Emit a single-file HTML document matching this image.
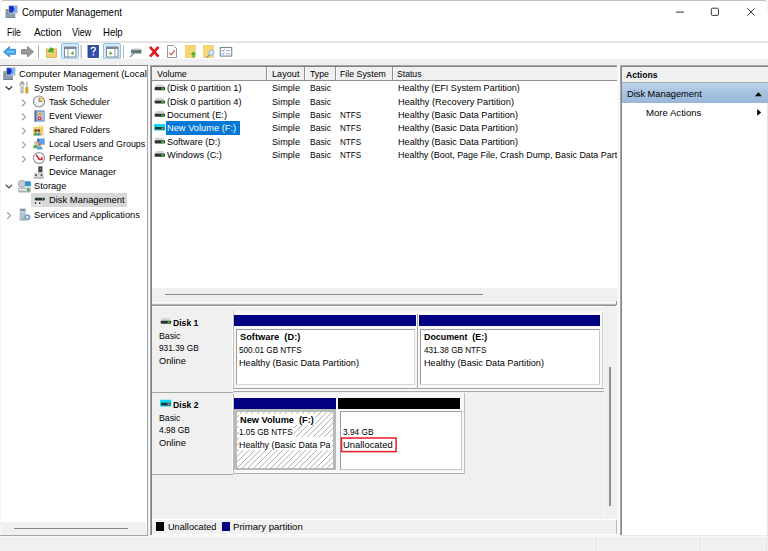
<!DOCTYPE html>
<html lang="en"><head><meta charset="utf-8"><title>Computer Management</title>
<style>
html,body{margin:0;padding:0;background:#fff;}
body{width:768px;height:551px;overflow:hidden;font-family:"Liberation Sans",sans-serif;}
#win{position:relative;width:768px;height:551px;overflow:hidden;background:#fff;}
#win div,#win span.t,#win svg{position:absolute;}
.t{white-space:pre;line-height:14px;height:14px;color:#000;font-size:9.9px;transform-origin:0 0;}
.g{background:#f0f0f0;}
.w{background:#fff;}

</style></head>
<body>
<div id="win">
<!-- window frame -->
<div style="left:0;top:0;width:768px;height:12px;box-sizing:border-box;border-top:1px solid #c2c2c2;border-left:1px solid #f3f3f3;border-right:1px solid #f3f3f3;border-radius:4px 4px 0 0;background:#fff"></div>
<!-- title icon -->
<svg style="left:4px;top:4px" width="16" height="16" viewBox="4 4 16 16">
 <rect x="8.3" y="5.2" width="9.5" height="8.3" rx="0.6" fill="#bcc4cd"/>
 <rect x="9.2" y="6.1" width="7.8" height="6.3" fill="#74b2f6"/>
 <path d="M9.2 6.1H13L14.2 9L12.6 12.4H9.2Z" fill="#1d2fc0"/>
 <path d="M13 6.100L14.200 9L12.600 12.400L15 10.200Z" fill="#4a78e0"/>
 <rect x="5.6" y="9" width="3" height="5" fill="#8b949c"/>
 <rect x="6.200" y="10.100" width="1.300" height="1.300" fill="#52c452"/>
 <rect x="5.600" y="13.500" width="9.600" height="4.400" fill="#6c7f93"/>
 <rect x="6.300" y="14.500" width="8.200" height="0.900" fill="#b9c5d1"/>
 <rect x="6.300" y="16.200" width="8.200" height="0.800" fill="#94a4b4"/>
</svg>
<!-- window controls -->
<svg style="left:670px;top:4px" width="92" height="16" viewBox="0 0 92 16">
 <path d="M5.8 8.1H14" stroke="#333" stroke-width="1" fill="none"/>
 <rect x="41.3" y="4.2" width="7.2" height="7.2" rx="1.2" fill="none" stroke="#333" stroke-width="1"/>
 <path d="M77.2 4.1L84.8 11.7M84.8 4.1L77.2 11.7" stroke="#333" stroke-width="1" fill="none"/>
</svg>
<!-- menu/toolbar separator -->
<div style="left:0;top:41px;width:768px;height:1px;background:#e9e9e9"></div>
<div style="left:0;top:42px;width:768px;height:1px;background:#e2e2e2"></div>
<!-- toolbar icons -->
<svg style="left:0;top:43px" width="250" height="17" viewBox="0 43 250 17">
 <!-- back arrow -->
 <path d="M3.5 51.8L9.6 46.6V49.3H15.6V54.3H9.6V57Z" fill="#45a4f0" stroke="#2b83d8" stroke-width="0.8"/><path d="M7 51.8H14" stroke="#6fd0fb" stroke-width="1.6"/>
 <!-- forward arrow -->
 <path d="M33.5 51.7L27.5 46.5V49.5H21.5V54H27.5V57Z" fill="#9a9a9a" stroke="#7a7a7a" stroke-width="0.8"/>
 <rect x="38" y="45" width="1" height="13.5" fill="#b5b5b5"/>
 <!-- up folder -->
 <rect x="46.5" y="49" width="10" height="8.5" fill="#f0cf6e" stroke="#d0a640" stroke-width="0.8"/>
 <path d="M48 52L51 47.5L54 49.5L52 50L53.5 52.5" fill="#3fae3a" stroke="#2f8e2c" stroke-width="0.6"/>
 <!-- show/hide tree (active) -->
 <rect x="61.5" y="43.5" width="17" height="15.5" rx="1.5" fill="#d7eafb" stroke="#8cc2f2" stroke-width="1"/>
 <rect x="64.5" y="47" width="11.5" height="10" fill="#fff" stroke="#7c8794" stroke-width="1"/>
 <rect x="64.5" y="47" width="11.5" height="2" fill="#7c8794"/>
 <rect x="67.5" y="49" width="0.8" height="8" fill="#7c8794"/>
 <path d="M73.5 51.2V55.2L70.5 53.2Z" fill="#3fae3a"/>
 <rect x="80.6" y="45" width="1.2" height="13.5" fill="#b5b5b5"/>
 <!-- help -->
 <rect x="88" y="45.5" width="10.5" height="12" fill="#2f4fb0" stroke="#223b8a" stroke-width="0.8"/>
 <path d="M91.3 49.2Q91.3 47.4 93.3 47.4Q95.3 47.4 95.3 49.2Q95.3 50.4 93.4 51.4V52.8" fill="none" stroke="#fff" stroke-width="1.3"/>
 <rect x="92.7" y="54" width="1.4" height="1.4" fill="#fff"/>
 <!-- action pane (active) -->
 <rect x="103.5" y="43.5" width="17" height="15.5" rx="1.5" fill="#d7eafb" stroke="#8cc2f2" stroke-width="1"/>
 <rect x="106.5" y="47" width="11.5" height="10" fill="#fff" stroke="#7c8794" stroke-width="1"/>
 <rect x="106.500" y="47" width="11.5" height="2" fill="#7c8794"/>
 <rect x="114.5" y="49" width="0.8" height="8" fill="#7c8794"/>
 <path d="M109.5 51.2V55.2L112.5 53.2Z" fill="#3fae3a"/>
 <rect x="123" y="45" width="1" height="13.5" fill="#b5b5b5"/>
 <!-- connect disk -->
 <rect x="131" y="49.5" width="10.5" height="4" rx="0.8" fill="#6f7a80"/>
 <rect x="131.5" y="48.5" width="9.5" height="1.3" fill="#c6cdd2"/>
 <rect x="138.5" y="50.8" width="2.5" height="1.6" fill="#2e9a3a"/>
 <path d="M130 57L134.5 53" stroke="#7f8d99" stroke-width="1.1" fill="none"/>
 <!-- delete X -->
 <path d="M150 46.8L158.5 56.6M158.5 46.8L150 56.6" stroke="#e01b24" stroke-width="2.6" fill="none"/>
 <!-- properties (sheet with check) -->
 <path d="M167.5 45.5H173.5L176.5 48.5V57.5H167.5Z" fill="#fff" stroke="#8a8a8a" stroke-width="0.9"/>
 <path d="M169.3 52.8L171.3 54.8L174.8 50.2" fill="none" stroke="#e0522e" stroke-width="1.1"/>
 <!-- yellow sheet with green arrow -->
 <rect x="185.3" y="45.3" width="10" height="12.4" fill="#f7d774" stroke="#f0c95a" stroke-width="0.6"/>
 <path d="M192.5 57.5V54.5H190.6L193.4 51.4L196.2 54.5H194.4V57.5Z" fill="#3fae3a"/>
 <!-- yellow sheet with magnifier -->
 <rect x="203.3" y="45.3" width="10" height="12.4" fill="#f7d774" stroke="#f0c95a" stroke-width="0.6"/>
 <circle cx="211.5" cy="52.8" r="2.6" fill="#cfe4f7" stroke="#8fb2d3" stroke-width="0.9"/>
 <path d="M209.5 55L206.5 57.5" stroke="#8a8f96" stroke-width="1.1"/>
 <!-- list view -->
 <rect x="220.3" y="47.5" width="11.4" height="8.6" fill="#fff" stroke="#7c8794" stroke-width="1.1"/>
 <path d="M222 50.3L223 51.3L224.6 49.4M222 53.5L223 54.5L224.6 52.6" fill="none" stroke="#3a8be0" stroke-width="0.9"/>
 <path d="M226 50.6H230M226 53.8H230" stroke="#9aa3ad" stroke-width="0.9"/>
</svg>
<!-- gray band below toolbar + main area backdrop -->
<div class="g" style="left:0;top:59px;width:768px;height:492px"></div>

<!-- LEFT PANEL -->
<div style="left:0;top:65px;width:148px;height:471px;background:#a0a4ab"></div>
<div style="left:0;top:65px;width:148px;height:1px;background:#858585"></div>
<div class="w" style="left:1px;top:66px;width:146px;height:469px"></div>
<div style="left:0;top:66px;width:1px;height:469px;background:#f6f6f6"></div>
<div class="g" style="left:1px;top:522.3px;width:145px;height:12.7px"></div>
<div style="left:14px;top:528px;width:114px;height:1px;background:#8a8a8a"></div>
<!-- tree selection -->
<div style="left:31px;top:193px;width:96px;height:14px;background:#d9d9d9"></div>

<!-- MIDDLE PANEL -->
<div style="left:148px;top:65px;width:2px;height:471px;background:#f6f6f6"></div>
<div style="left:150px;top:65px;width:467px;height:470px;background:#a6a6a6"></div>
<div style="left:151px;top:66px;width:466px;height:469px;background:#808080"></div>
<div style="left:617px;top:65px;width:3px;height:471px;background:#f8f8f8"></div>
<div style="left:150px;top:535px;width:470px;height:1px;background:#f7f7f7"></div>
<div class="g" style="left:152px;top:67px;width:465px;height:467px"></div>
<div style="left:152px;top:533.6px;width:465px;height:1px;background:#b4b4b4"></div>
<div style="left:615.6px;top:520px;width:1px;height:14px;background:#bcbcbc"></div>
<div style="left:603px;top:307px;width:1px;height:212px;background:#f9f9f9"></div>
<!-- list view -->
<div class="w" style="left:152px;top:67px;width:465px;height:221px"></div>
<div class="g" style="left:152px;top:67px;width:465px;height:13px"></div>
<div style="left:152px;top:80px;width:465px;height:1px;background:#8e8e8e"></div>
<div style="left:266px;top:67px;width:1px;height:13px;background:#8e8e8e"></div><div class="w" style="left:267px;top:67px;width:1px;height:13px"></div>
<div style="left:304px;top:67px;width:1px;height:13px;background:#8e8e8e"></div><div class="w" style="left:305px;top:67px;width:1px;height:13px"></div>
<div style="left:334.500px;top:67px;width:1px;height:13px;background:#8e8e8e"></div><div class="w" style="left:335.5px;top:67px;width:1px;height:13px"></div>
<div style="left:391.500px;top:67px;width:1px;height:13px;background:#8e8e8e"></div><div class="w" style="left:392.5px;top:67px;width:1px;height:13px"></div>
<!-- selected row -->
<div style="left:166px;top:121.4px;width:74px;height:13.3px;background:#0078d7"></div>
<!-- h scrollbar of list -->
<div style="left:165px;top:293.5px;width:318px;height:1px;background:#8a8a8a"></div>
<!-- splitter -->
<div style="left:152px;top:302px;width:464px;height:1px;background:#fafafa"></div>
<div style="left:152px;top:304px;width:464px;height:1px;background:#b4b4b4"></div>
<div style="left:152px;top:305px;width:464px;height:1px;background:#969696"></div>
<div class="w" style="left:152px;top:306px;width:451px;height:1px"></div>
<div style="left:615.5px;top:301px;width:1px;height:4px;background:#8e8e8e"></div>
<!-- v scrollbar of disk map -->
<div style="left:609.4px;top:366.5px;width:1.4px;height:139px;background:#909090"></div>
<!-- DISK MAP -->
<div style="left:233px;top:310.5px;width:370.5px;height:78px;background:#f8f8f8;"></div>
<div style="left:231.5px;top:310.5px;width:1px;height:81.5px;background:#fff;"></div>
<div style="left:232.5px;top:310.5px;width:1px;height:81.5px;background:#bdbdbd;"></div>
<div style="left:152px;top:391.8px;width:81px;height:1px;background:#a6a6a6;"></div>
<div style="left:233px;top:388px;width:370.5px;height:0.9px;background:#a0a0a0;"></div>
<div style="left:233px;top:389px;width:370.5px;height:2px;background:#f8f8f8;"></div>
<div style="left:233px;top:391px;width:370.5px;height:0.9px;background:#a8a8a8;"></div>
<div style="left:234px;top:315.2px;width:182px;height:11px;background:#000080;"></div>
<div style="left:236px;top:328.5px;width:178.5px;height:56.5px;background:#fff;box-sizing:border-box;border:1px solid #9c9c9c;border-right-color:#d8d8d8;border-bottom-color:#d8d8d8"></div>
<div style="left:416.5px;top:314px;width:1px;height:74px;background:#a8a8a8;"></div>
<div style="left:418.6px;top:315.2px;width:181.6px;height:11px;background:#000080;"></div>
<div style="left:420.4px;top:328.5px;width:180px;height:56.5px;background:#fff;box-sizing:border-box;border:1px solid #9c9c9c;border-right-color:#c8c8c8;border-bottom-color:#d8d8d8"></div>
<div style="left:601.6px;top:312px;width:1px;height:76px;background:#d0d0d0;"></div>
<div style="left:233px;top:392.5px;width:231.5px;height:80.5px;background:#f8f8f8;"></div>
<div style="left:231.5px;top:393px;width:1px;height:81px;background:#fff;"></div>
<div style="left:232.5px;top:393px;width:1px;height:81px;background:#bdbdbd;"></div>
<div style="left:152px;top:473.5px;width:81px;height:1px;background:#a6a6a6;"></div>
<div style="left:233px;top:473px;width:231.5px;height:1px;background:#b0b0b0;"></div>
<div style="left:464px;top:392.5px;width:1px;height:81px;background:#c0c0c0;"></div>
<div style="left:234px;top:397.8px;width:101.6px;height:10.8px;background:#000080;"></div>
<div style="left:233.5px;top:409px;width:102.5px;height:61px;background:#b9b9b9"></div>
<div style="left:236.5px;top:412px;width:96.5px;height:55.5px;background:#fff"></div>
<div style="left:236.5px;top:412px;width:96.5px;height:55.5px;background:repeating-linear-gradient(135deg,rgba(0,0,0,0) 0,rgba(0,0,0,0) 2.9px,#adadad 3.3px,#adadad 3.6px,rgba(0,0,0,0) 4px)"></div>
<div style="left:239px;top:413.6px;width:75.6px;height:11px;background:#fff;"></div>
<div style="left:239px;top:424.5px;width:55.2px;height:12.5px;background:#fff;"></div>
<div style="left:239px;top:437px;width:92.6px;height:12.8px;background:#fff;"></div>
<div style="left:338px;top:398px;width:122.2px;height:10.6px;background:#000;"></div>
<div style="left:339.6px;top:410.6px;width:122px;height:59.3px;background:#fff;box-sizing:border-box;border:1px solid #9c9c9c;border-right-color:#c4c4c4;border-bottom-color:#c4c4c4"></div>
<svg style="left:338px;top:434px" width="62" height="21" viewBox="338 434 62 21"><rect x="341.5" y="438" width="54.6" height="13.6" fill="none" stroke="#ec1c24" stroke-width="1.5"/></svg>
<div style="left:152px;top:519.3px;width:464px;height:1px;background:#fff;"></div>
<div style="left:156px;top:522px;width:8px;height:9px;background:#000;"></div>
<div style="left:222px;top:522px;width:8px;height:9px;background:#000080;"></div>
<div style="left:152px;top:533.5px;width:467px;height:1.5px;background:#fff;"></div>
<!-- RIGHT PANEL -->
<div style="left:620px;top:65px;width:148px;height:470px;background:#a8a8a8;"></div>
<div style="left:621px;top:66px;width:147px;height:469px;background:#848484;"></div>
<div style="left:622px;top:67px;width:146px;height:467.6px;background:#fff;"></div>
<div style="left:620px;top:534.6px;width:148px;height:1.4px;background:#eaeaea;"></div>
<div style="left:767px;top:67px;width:1px;height:468px;background:#e6e6e6;"></div>
<div style="left:622px;top:67px;width:146px;height:15px;background:#f0f0f0;"></div>
<div style="left:622px;top:82px;width:146px;height:1px;background:#adadad;"></div>
<div style="left:622px;top:83px;width:146px;height:19.6px;background:transparent;background:linear-gradient(#bed3ea,#a9c4e2 45%,#98b7d9)"></div>
<svg style="left:750px;top:88px" width="16" height="30" viewBox="750 88 16 30"><path d="M754.9 96.2L758.4 92.2L761.9 96.2Z" fill="#000"/><path d="M757.2 109L761.2 112.4L757.2 115.8Z" fill="#000"/></svg>
<!-- STATUS BAR -->
<div style="left:0;top:536px;width:768px;height:15px;background:#f0f0f0;"></div>
<div style="left:0;top:536.4px;width:768px;height:1px;background:#f7f7f7;"></div>
<div style="left:596.5px;top:537px;width:1px;height:14px;background:#fbfbfb;"></div>
<div style="left:595.5px;top:537px;width:1px;height:14px;background:#e2e2e2;"></div>
<div style="left:700.5px;top:537px;width:1px;height:14px;background:#fbfbfb;"></div>
<div style="left:699.5px;top:537px;width:1px;height:14px;background:#e2e2e2;"></div>
<div style="left:765.5px;top:537px;width:1px;height:14px;background:#e2e2e2;"></div>
<!-- TREE ICONS -->
<svg style="left:0;top:66px" width="48" height="160" viewBox="0 66 48 160">
<!-- chevrons -->
<g fill="none" stroke="#3c3c3c" stroke-width="1.2" stroke-linecap="round" stroke-linejoin="round">
 <path d="M6 86.7L8.9 89.5L11.8 86.7"/>
 <path d="M6 185.1L8.9 187.9L11.8 185.1"/>
</g>
<g fill="none" stroke="#9e9e9e" stroke-width="1.2" stroke-linecap="round" stroke-linejoin="round">
 <path d="M22.4 100L25.4 102.9L22.4 105.8"/>
 <path d="M22.4 114L25.4 116.9L22.4 119.8"/>
 <path d="M22.4 128.1L25.4 131L22.4 133.9"/>
 <path d="M22.4 142.1L25.4 145L22.4 147.9"/>
 <path d="M22.4 156.3L25.4 159.200L22.4 162.1"/>
 <path d="M7.600 212.7L10.6 215.600L7.6 218.5"/>
</g>
<!-- computer management -->
<g transform="translate(-2.3 62.1)">
 <rect x="8.3" y="5.2" width="9.5" height="8.3" rx="0.6" fill="#bcc4cd"/>
 <rect x="9.2" y="6.1" width="7.8" height="6.3" fill="#74b2f6"/>
 <path d="M9.2 6.1H13L14.2 9L12.6 12.4H9.2Z" fill="#1d2fc0"/>
 <path d="M13 6.100L14.200 9L12.600 12.400L15 10.200Z" fill="#4a78e0"/>
 <rect x="5.6" y="9" width="3" height="5" fill="#8b949c"/>
 <rect x="6.200" y="10.100" width="1.300" height="1.300" fill="#52c452"/>
 <rect x="5.600" y="13.500" width="9.600" height="4.400" fill="#6c7f93"/>
 <rect x="6.300" y="14.500" width="8.200" height="0.900" fill="#b9c5d1"/>
 <rect x="6.300" y="16.200" width="8.200" height="0.800" fill="#94a4b4"/>
</g>
<!-- system tools -->
<g>
 <path d="M21.8 81.600C19.8 82.5 19.4 85.2 21 86.500V92.6Q22 93.6 23 92.600V86.5C24.6 85.2 24.3 82.5 22.600 81.6V84.300H21.8Z" fill="#f4f4f4" stroke="#8c8c8c" stroke-width="0.9"/>
 <rect x="26.3" y="81.5" width="1.200" height="5.6" fill="#a8a8a8"/>
 <rect x="25.2" y="86.900" width="3.2" height="6.600" rx="0.8" fill="#dca032"/>
</g>
<!-- task scheduler -->
<g>
 <circle cx="39" cy="101.5" r="5.500" fill="#eef3f9" stroke="#8e8e8e" stroke-width="1.2"/>
 <path d="M39 101.5V96.800A4.700 4.700 0 0 1 43.600 101.5Z" fill="#f0c860"/>
 <path d="M39 98V101.5H41.800" stroke="#5b6b80" stroke-width="0.8" fill="none"/>
</g>
<!-- event viewer -->
<g>
 <rect x="34.6" y="110.3" width="10.200" height="11.400" rx="0.8" fill="#7f9fd6"/>
 <rect x="34.600" y="110.3" width="1.600" height="11.4" fill="#5a6a90"/>
 <rect x="37" y="112" width="6.800" height="8.2" fill="#a9c1e8"/>
 <path d="M38.7 116V114.200Q38.700 112 40.200 112Q41.700 112 41.700 114.2V116Z" fill="#eeb030"/>
 <circle cx="39.600" cy="118.4" r="1.900" fill="#e03030"/>
 <circle cx="39.600" cy="118.400" r="0.700" fill="#fff"/>
</g>
<!-- shared folders -->
<g>
 <path d="M33.200 127H38.300L39.300 125.600H43.400V135.400H33.200Z" fill="#f3cd68"/>
 <rect x="39.800" y="126.300" width="3" height="0.900" fill="#fff6d8"/>
 <circle cx="35.700" cy="130.600" r="1.400" fill="#5a4630"/>
 <circle cx="38.800" cy="130.600" r="1.400" fill="#5a4630"/>
 <path d="M33.600 135.600Q33.600 132.500 35.700 132.500Q37.200 132.500 37.400 135.600Z" fill="#4fae4a"/>
 <path d="M36.900 135.600Q36.900 132.500 38.800 132.500Q40.800 132.500 40.800 135.600Z" fill="#4f8fd0"/>
</g>
<!-- local users and groups -->
<g>
 <rect x="37.600" y="138.300" width="7.300" height="6.600" fill="#9fb0c8"/>
 <rect x="38.400" y="139" width="5.800" height="5" fill="#5a9cf0"/>
 <path d="M37.200 138.600L39.400 140.300L37.600 142.500Z" fill="#1a2fb5"/>
 <circle cx="35.900" cy="142.600" r="1.700" fill="#d9b48a"/>
 <circle cx="39.400" cy="144.600" r="1.800" fill="#b98a62"/>
 <path d="M33.200 148.200Q33.200 144.600 35.800 144.600Q38 144.600 38 148.200Z" fill="#58b052"/>
 <path d="M36.800 149.400Q36.800 146.200 39.600 146.200Q42.600 146.200 42.600 149.400Z" fill="#5f9fe0"/>
</g>
<!-- performance -->
<g>
 <circle cx="39" cy="158.100" r="5.500" fill="#fff" stroke="#9a9a9a" stroke-width="1.200"/>
 <path d="M36.200 155L39.400 159.300L41.900 159.500L41.900 156.900" fill="none" stroke="#e01c24" stroke-width="1.500" stroke-linejoin="round"/>
</g>
<!-- device manager -->
<g>
 <rect x="38.200" y="166.300" width="4.300" height="6.400" fill="#4a4f52"/>
 <rect x="40" y="168" width="1" height="1" fill="#38c040"/>
 <rect x="33.800" y="172.400" width="10" height="6.200" fill="#d8dadc"/>
 <rect x="33.800" y="177.400" width="10" height="1.200" fill="#a8abad"/>
 <rect x="35.300" y="174.200" width="1.600" height="1.900" fill="#3c3f42"/>
 <rect x="40.700" y="174.200" width="1.600" height="1.900" fill="#3c3f42"/>
</g>
<!-- storage -->
<g>
 <ellipse cx="22" cy="183.800" rx="3.700" ry="3.300" fill="#c9cdd0" stroke="#8f9498" stroke-width="0.800"/>
 <rect x="25" y="181.300" width="5.900" height="5" rx="0.800" fill="#2f90dc"/>
 <rect x="18.300" y="187.500" width="12.500" height="5" rx="1" fill="#a9adb1"/>
 <rect x="19.200" y="188.700" width="8" height="2" fill="#e8eaec"/>
 <rect x="27.300" y="188.600" width="1.700" height="2.600" fill="#2fae3a"/>
</g>
<!-- disk management -->
<g>
 <rect x="34.900" y="197.700" width="10" height="2.700" rx="0.800" fill="#2e3133"/>
 <rect x="42.100" y="197.900" width="1.100" height="2.200" fill="#35c03e"/>
 <rect x="33.300" y="200.900" width="8.700" height="5.100" fill="#e4e5e6"/>
 <rect x="34.800" y="202.100" width="1.400" height="1.900" fill="#3c3f42"/>
 <rect x="39" y="202.100" width="1.400" height="1.900" fill="#3c3f42"/>
</g>
<!-- services and applications -->
<g>
 <rect x="19.600" y="208.400" width="6.200" height="12.400" fill="#b4c0cc"/>
 <rect x="20.600" y="209.500" width="4.200" height="1" fill="#4a5a78"/>
 <rect x="20.600" y="211.600" width="4.200" height="0.800" fill="#e8eef4"/>
 <circle cx="27.300" cy="217.300" r="3.100" fill="#7fa0c8"/>
 <circle cx="27.300" cy="217.300" r="1.200" fill="#e8f0f8"/>
 <rect x="22.500" y="218.500" width="2" height="1.500" fill="#6fc070"/>
</g>
</svg>
<!-- DRIVE ICONS -->
<svg style="left:0;top:0" width="768" height="551" viewBox="0 0 768 551">
<path d="M155.7 84.4H163.5L164.4 87.3H154.8Z" fill="#d3d6d9"/><rect x="154.6" y="87.1" width="10.4" height="3.1" rx="0.8" fill="#2f3133"/><rect x="161.5" y="87.6" width="2.3" height="2.1" rx="0.5" fill="#2fc23f"/>
<path d="M155.7 97.7H163.5L164.4 100.6H154.8Z" fill="#d3d6d9"/><rect x="154.6" y="100.4" width="10.4" height="3.1" rx="0.8" fill="#2f3133"/><rect x="161.5" y="100.9" width="2.3" height="2.1" rx="0.5" fill="#2fc23f"/>
<path d="M155.7 111.0H163.5L164.4 113.9H154.8Z" fill="#d3d6d9"/><rect x="154.6" y="113.7" width="10.4" height="3.1" rx="0.8" fill="#2f3133"/><rect x="161.5" y="114.2" width="2.3" height="2.1" rx="0.5" fill="#2fc23f"/>
<rect x="154.0" y="124.0" width="11.200" height="6.6" rx="1" fill="#0cd5ee"/><rect x="155.0" y="127.0" width="9.400" height="2.6" rx="0.5" fill="#2f3133"/><rect x="161.5" y="127.4" width="2" height="1.800" fill="#8a9a90"/>
<path d="M155.7 137.6H163.5L164.4 140.5H154.8Z" fill="#d3d6d9"/><rect x="154.6" y="140.3" width="10.4" height="3.1" rx="0.8" fill="#2f3133"/><rect x="161.5" y="140.8" width="2.3" height="2.1" rx="0.5" fill="#2fc23f"/>
<path d="M155.7 150.9H163.5L164.4 153.8H154.8Z" fill="#d3d6d9"/><rect x="154.6" y="153.6" width="10.4" height="3.1" rx="0.8" fill="#2f3133"/><rect x="161.5" y="154.1" width="2.3" height="2.1" rx="0.5" fill="#2fc23f"/>
<path d="M161.8 318.0H169.6L170.5 320.9H160.9Z" fill="#d3d6d9"/><rect x="160.7" y="320.7" width="10.4" height="3.1" rx="0.8" fill="#2f3133"/><rect x="167.6" y="321.2" width="2.3" height="2.1" rx="0.5" fill="#2fc23f"/>
<rect x="160.1" y="399.8" width="11.200" height="6.6" rx="1" fill="#0cd5ee"/><rect x="161.1" y="402.8" width="9.400" height="2.6" rx="0.5" fill="#2f3133"/><rect x="167.6" y="403.2" width="2" height="1.800" fill="#8a9a90"/>
</svg>

<!-- TEXT -->
<span class="t" style="left:21.95px;top:6px;font-size:10.2px;transform:scale(0.9327,1);">Computer Management</span>
<span class="t" style="left:7.06px;top:26px;font-size:10.2px;transform:scale(0.8454,1);">File</span>
<span class="t" style="left:33.83px;top:26px;font-size:10.2px;transform:scale(0.9748,1);">Action</span>
<span class="t" style="left:71.89px;top:26px;font-size:10.2px;transform:scale(0.8797,1);">View</span>
<span class="t" style="left:103.00px;top:26px;font-size:10.2px;transform:scale(0.9377,1);">Help</span>
<div style="left:17.90px;top:65px;width:129.30px;height:18px;overflow:hidden"><span class="t" style="left:1.50px;top:2px;transform:scale(0.9592,1);">Computer Management (Local</span></div>
<span class="t" style="left:34.22px;top:81px;transform:scale(0.9134,1);">System Tools</span>
<span class="t" style="left:49.22px;top:95px;transform:scale(0.8998,1);">Task Scheduler</span>
<span class="t" style="left:49.22px;top:109px;transform:scale(0.9153,1);">Event Viewer</span>
<span class="t" style="left:49.22px;top:123px;transform:scale(0.9032,1);">Shared Folders</span>
<span class="t" style="left:49.22px;top:137px;transform:scale(0.9043,1);">Local Users and Groups</span>
<span class="t" style="left:49.22px;top:151px;transform:scale(0.9571,1);">Performance</span>
<span class="t" style="left:49.22px;top:165px;transform:scale(0.9342,1);">Device Manager</span>
<span class="t" style="left:34.22px;top:179px;transform:scale(0.9368,1);">Storage</span>
<span class="t" style="left:49.22px;top:193px;transform:scale(0.9509,1);">Disk Management</span>
<span class="t" style="left:34.22px;top:208px;transform:scale(0.9408,1);">Services and Applications</span>
<span class="t" style="left:157.15px;top:67px;transform:scale(0.9048,1);">Volume</span>
<span class="t" style="left:271.52px;top:67px;transform:scale(0.9250,1);">Layout</span>
<span class="t" style="left:309.66px;top:67px;transform:scale(0.8839,1);">Type</span>
<span class="t" style="left:340.20px;top:67px;transform:scale(0.8887,1);">File System</span>
<span class="t" style="left:397.25px;top:67px;transform:scale(0.8735,1);">Status</span>
<span class="t" style="left:167.39px;top:81px;transform:scale(0.9292,1);">(Disk 0 partition 1)</span>
<span class="t" style="left:271.52px;top:81px;transform:scale(0.9278,1);">Simple</span>
<span class="t" style="left:309.66px;top:81px;transform:scale(0.8688,1);">Basic</span>
<span class="t" style="left:397.62px;top:81px;transform:scale(0.9176,1);">Healthy (EFI System Partition)</span>
<span class="t" style="left:167.39px;top:95px;transform:scale(0.9292,1);">(Disk 0 partition 4)</span>
<span class="t" style="left:271.52px;top:95px;transform:scale(0.9278,1);">Simple</span>
<span class="t" style="left:309.66px;top:95px;transform:scale(0.8688,1);">Basic</span>
<span class="t" style="left:397.62px;top:95px;transform:scale(0.9392,1);">Healthy (Recovery Partition)</span>
<span class="t" style="left:167.39px;top:108px;transform:scale(0.9433,1);">Document (E:)</span>
<span class="t" style="left:271.52px;top:108px;transform:scale(0.9278,1);">Simple</span>
<span class="t" style="left:309.66px;top:108px;transform:scale(0.8688,1);">Basic</span>
<span class="t" style="left:340.20px;top:108px;transform:scale(0.8238,1);">NTFS</span>
<span class="t" style="left:397.62px;top:108px;transform:scale(0.9259,1);">Healthy (Basic Data Partition)</span>
<span class="t" style="left:167.39px;top:121px;color:#fff;transform:scale(0.9395,1);">New Volume (F:)</span>
<span class="t" style="left:271.52px;top:121px;transform:scale(0.9278,1);">Simple</span>
<span class="t" style="left:309.66px;top:121px;transform:scale(0.8688,1);">Basic</span>
<span class="t" style="left:340.20px;top:121px;transform:scale(0.8238,1);">NTFS</span>
<span class="t" style="left:397.62px;top:121px;transform:scale(0.9259,1);">Healthy (Basic Data Partition)</span>
<span class="t" style="left:167.39px;top:135px;transform:scale(0.9173,1);">Software (D:)</span>
<span class="t" style="left:271.52px;top:135px;transform:scale(0.9278,1);">Simple</span>
<span class="t" style="left:309.66px;top:135px;transform:scale(0.8688,1);">Basic</span>
<span class="t" style="left:340.20px;top:135px;transform:scale(0.8238,1);">NTFS</span>
<span class="t" style="left:397.62px;top:135px;transform:scale(0.9259,1);">Healthy (Basic Data Partition)</span>
<span class="t" style="left:167.39px;top:148px;transform:scale(0.9261,1);">Windows (C:)</span>
<span class="t" style="left:271.52px;top:148px;transform:scale(0.9278,1);">Simple</span>
<span class="t" style="left:309.66px;top:148px;transform:scale(0.8688,1);">Basic</span>
<span class="t" style="left:340.20px;top:148px;transform:scale(0.8238,1);">NTFS</span>
<div style="left:396.30px;top:146px;width:220.50px;height:18px;overflow:hidden"><span class="t" style="left:1.32px;top:2px;transform:scale(0.9056,1);">Healthy (Boot, Page File, Crash Dump, Basic Data Part</span></div>
<span class="t" style="left:173.20px;top:316px;font-weight:bold;transform:scale(0.8729,1);">Disk 1</span>
<span class="t" style="left:158.64px;top:329px;transform:scale(0.8884,1);">Basic</span>
<span class="t" style="left:158.64px;top:341px;transform:scale(0.8402,1);">931.39 GB</span>
<span class="t" style="left:158.64px;top:354px;transform:scale(0.9386,1);">Online</span>
<span class="t" style="left:239.59px;top:330px;font-weight:bold;transform:scale(0.9397,1);">Software  (D:)</span>
<span class="t" style="left:239.43px;top:343px;transform:scale(0.8281,1);">500.01 GB NTFS</span>
<span class="t" style="left:239.43px;top:356px;transform:scale(0.9264,1);">Healthy (Basic Data Partition)</span>
<span class="t" style="left:424.27px;top:330px;font-weight:bold;transform:scale(0.8990,1);">Document  (E:)</span>
<span class="t" style="left:424.27px;top:343px;transform:scale(0.8245,1);">431.38 GB NTFS</span>
<span class="t" style="left:424.27px;top:356px;transform:scale(0.9259,1);">Healthy (Basic Data Partition)</span>
<span class="t" style="left:173.20px;top:398px;font-weight:bold;transform:scale(0.8771,1);">Disk 2</span>
<span class="t" style="left:158.64px;top:411px;transform:scale(0.8884,1);">Basic</span>
<span class="t" style="left:158.64px;top:423px;transform:scale(0.8536,1);">4.98 GB</span>
<span class="t" style="left:158.64px;top:436px;transform:scale(0.9386,1);">Online</span>
<span class="t" style="left:239.59px;top:413px;font-weight:bold;transform:scale(0.9305,1);">New Volume  (F:)</span>
<span class="t" style="left:239.43px;top:425px;transform:scale(0.8293,1);">1.05 GB NTFS</span>
<span class="t" style="left:239.43px;top:438px;transform:scale(0.8960,1);">Healthy (Basic Data Pa</span>
<span class="t" style="left:343.34px;top:425px;transform:scale(0.8417,1);">3.94 GB</span>
<span class="t" style="left:343.43px;top:438px;transform:scale(0.9515,1);">Unallocated</span>
<span class="t" style="left:168.25px;top:520px;transform:scale(0.9278,1);">Unallocated</span>
<span class="t" style="left:233.40px;top:520px;transform:scale(0.9698,1);">Primary partition</span>
<span class="t" style="left:625.91px;top:68px;font-weight:bold;transform:scale(0.8686,1);">Actions</span>
<span class="t" style="left:626.70px;top:87px;transform:scale(0.9390,1);">Disk Management</span>
<span class="t" style="left:645.80px;top:106px;transform:scale(0.9704,1);">More Actions</span>
</div>
</body></html>
